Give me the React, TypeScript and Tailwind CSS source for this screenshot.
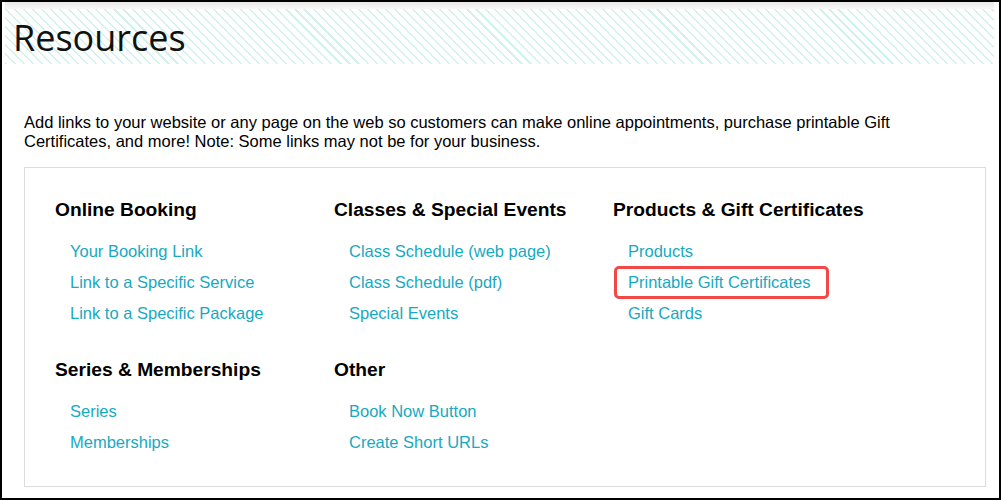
import React from 'react';

interface Section {
  title: string;
  links: string[];
}

const sections: Section[] = [
  { title: 'Online Booking', links: ['Your Booking Link', 'Link to a Specific Service', 'Link to a Specific Package'] },
  { title: 'Classes & Special Events', links: ['Class Schedule (web page)', 'Class Schedule (pdf)', 'Special Events'] },
  { title: 'Products & Gift Certificates', links: ['Products', 'Printable Gift Certificates', 'Gift Cards'] },
  { title: 'Series & Memberships', links: ['Series', 'Memberships'] },
  { title: 'Other', links: ['Book Now Button', 'Create Short URLs'] },
];

const highlighted = 'Printable Gift Certificates';

const App: React.FC = () => {
  return (
    <div className="w-[1001px] h-[500px] border-2 border-black bg-white overflow-hidden font-['Liberation_Sans',Arial,sans-serif]">
      {/* Page header */}
      <div className="ml-[3px] mr-[5px]">
        <div className="h-[7px] bg-gradient-to-b from-[#e9e9e9] to-[#f7f7f7]" />
        <div className="h-[55px] flex items-center pl-[8px] bg-[repeating-linear-gradient(45deg,#d3f2ec_0px,#d3f2ec_1.5px,#ffffff_1.5px,#ffffff_6.4px)]">
          <h1 className="font-['Open_Sans',sans-serif] text-[36px] leading-none text-[#111] pt-[3px]">Resources</h1>
        </div>
      </div>

      {/* Intro */}
      <p className="mt-[49px] ml-[22px] w-[900px] text-[16.5px] leading-[19px] text-black">
        Add links to your website or any page on the web so customers can make online appointments, purchase printable Gift
        Certificates, and more! Note: Some links may not be for your business.
      </p>

      {/* Links box */}
      <div className="mt-[16px] ml-[22px] w-[962px] border border-[#dddddd] pt-[30px] pb-[28px] pl-[30px]">
        <div className="grid grid-cols-[279px_279px_279px] gap-y-[29px]">
          {sections.map((section) => (
            <div key={section.title}>
              <h3 className="text-[19.2px] leading-[24px] font-bold text-black">{section.title}</h3>
              <ul className="mt-[14px] pl-[15px]">
                {section.links.map((link) => (
                  <li key={link} className="h-[31px] leading-[31px]">
                    <span className="relative inline-block text-[16.5px] text-[#17a9c1]">
                      {link}
                      {link === highlighted && (
                        <span className="absolute -left-[14px] -right-[19px] -top-[1px] -bottom-[1px] border-[3px] border-[#f24848] rounded-[5px]" />
                      )}
                    </span>
                  </li>
                ))}
              </ul>
            </div>
          ))}
        </div>
      </div>
    </div>
  );
};

export default App;
